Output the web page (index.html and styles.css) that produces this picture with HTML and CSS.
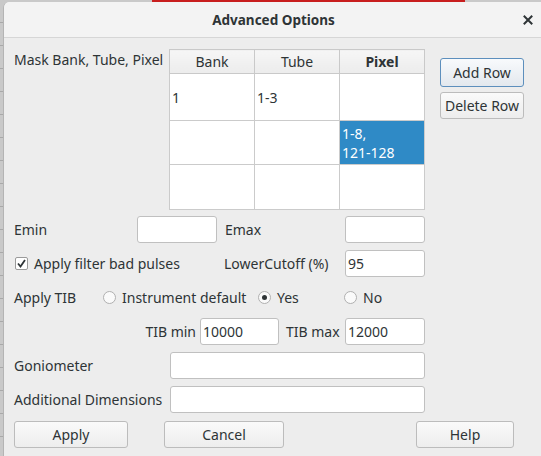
FILE: index.html
```html
<!DOCTYPE html>
<html>
<head>
<meta charset="utf-8">
<link rel="stylesheet" href="styles.css">
</head>
<body>
<div class="window">
  <div class="titlebar">
    <span class="title">Advanced Options</span>
    <svg class="close" width="10" height="10" viewBox="0 0 10 10"><path d="M1.5 1.5L8.5 8.5M8.5 1.5L1.5 8.5" stroke="#2e3436" stroke-width="2" stroke-linecap="square"/></svg>
  </div>
  <div class="content">
    <div class="mask-row">
      <div class="mask-label">Mask Bank, Tube, Pixel</div>
      <table class="grid">
        <colgroup><col><col><col></colgroup>
        <thead>
          <tr><th>Bank</th><th>Tube</th><th class="bold">Pixel</th></tr>
        </thead>
        <tbody>
          <tr class="r1"><td>1</td><td>1-3</td><td></td></tr>
          <tr class="r2"><td></td><td></td><td class="sel">1-8,<br>121-128</td></tr>
          <tr class="r3"><td></td><td></td><td></td></tr>
        </tbody>
      </table>
      <div class="side-buttons">
        <button class="btn default">Add Row</button>
        <button class="btn">Delete Row</button>
      </div>
    </div>

    <div class="row">
      <span class="lbl w-emin">Emin</span>
      <input class="field small" type="text">
      <span class="lbl w-emax">Emax</span>
      <input class="field small" type="text">
    </div>

    <div class="row">
      <label class="check w-check"><span class="box"><svg width="11" height="11" viewBox="0 0 11 11"><path d="M2 5.5L4.5 8.5L9 2" fill="none" stroke="#2e3436" stroke-width="1.8"/></svg></span>Apply filter bad pulses</label>
      <span class="lbl w-cut">LowerCutoff (%)</span>
      <input class="field small" type="text" value="95">
    </div>

    <div class="row">
      <span class="lbl w-tib">Apply TIB</span>
      <span class="radio w-r1"><span class="dot"></span>Instrument default</span>
      <span class="radio w-r2"><span class="dot on"></span>Yes</span>
      <span class="radio"><span class="dot"></span>No</span>
    </div>

    <div class="row">
      <span class="lbl w-tibmin">TIB min</span>
      <input class="field tib" type="text" value="10000">
      <span class="lbl w-tibmax">TIB max</span>
      <input class="field small" type="text" value="12000">
    </div>

    <div class="row">
      <span class="lbl w-long">Goniometer</span>
      <input class="field wide" type="text">
    </div>

    <div class="row">
      <span class="lbl w-long">Additional Dimensions</span>
      <input class="field wide" type="text">
    </div>

    <div class="row bottom">
      <button class="btn apply">Apply</button>
      <button class="btn cancel">Cancel</button>
      <button class="btn help">Help</button>
    </div>
  </div>
</div>
</body>
</html>
```

FILE: styles.css
```css
* { box-sizing: border-box; }

html, body {
  margin: 0;
  height: 456px;
  overflow: hidden;
}

body {
  background:
    linear-gradient(#c81e1e, #c81e1e) 152px 0 / 313px 2px no-repeat,
    repeating-linear-gradient(#c9c9c9 0 22px, #a9a9a9 22px 23px);
  font-family: "Noto Sans", "DejaVu Sans", sans-serif;
  font-size: 14px;
  color: #2e3436;
}

.window {
  margin: 2px 0 0 3px;
  width: 540px;
  height: 456px;
  background: #ededed;
  border-radius: 6px 0 0 0;
  border-left: 1px solid #b4b4b4;
  overflow: hidden;
}

.titlebar {
  height: 36px;
  background: #f3f3f3;
  border-bottom: 1px solid #d6d6d6;
  display: flex;
  align-items: center;
  justify-content: center;
  position: relative;
}

.title {
  font-weight: bold;
  font-size: 13.5px;
  color: #2e3436;
}

.close {
  position: absolute;
  right: 10px;
  top: 13px;
}

.content {
  padding: 11px 0 0 10px;
}

.mask-row {
  display: flex;
  align-items: flex-start;
}

.mask-label {
  width: 155px;
  padding-top: 2px;
  line-height: 18px;
  white-space: nowrap;
}

.grid {
  width: 256px;
  border-collapse: collapse;
  table-layout: fixed;
  background: #fff;
  border: 1px solid #c2c2c2;
}

.grid col { width: 85px; }

.grid th {
  height: 24px;
  font-weight: normal;
  background: linear-gradient(#f6f6f6, #ececec);
  border: 1px solid #c9c9c9;
  padding: 0;
  text-align: center;
}

.grid th.bold { font-weight: bold; }

.grid td {
  border: 1px solid #cbcbcb;
  padding: 0 2px;
  vertical-align: middle;
  line-height: 19px;
}

.grid .r1 td { height: 47px; }
.grid .r2 td { height: 44px; }
.grid .r3 td { height: 45px; }

.grid td.sel {
  background: #2f8ac6;
  color: #fff;
}

.side-buttons {
  display: flex;
  flex-direction: column;
  gap: 5px;
  margin: 9px 0 0 15px;
  width: 84px;
}

.btn {
  font-family: inherit;
  font-size: 14px;
  color: #2e3436;
  height: 27px;
  padding: 0;
  background: linear-gradient(#fafafa, #ededed);
  border: 1px solid #bcbcbc;
  border-radius: 3px;
  white-space: nowrap;
}

.btn.default {
  border-color: #5d8fbd;
  background: linear-gradient(#f8fafc, #e3e8ee);
  height: 29px;
}

.row {
  display: flex;
  align-items: center;
  height: 27px;
  margin-top: 7px;
}

.mask-row + .row { margin-top: 6px; }

.lbl { display: inline-block; white-space: nowrap; }
.w-emin { width: 123px; }
.w-emax { width: 128px; padding-left: 8px; }
.w-check { width: 210px; }
.w-cut { width: 121px; }
.w-tib { width: 89px; }
.w-tibmin { width: 186px; text-align: right; padding-right: 4px; }
.w-tibmax { width: 66px; padding-left: 7px; }
.w-long { width: 156px; }

.field {
  height: 27px;
  border: 1px solid #c0c0c0;
  border-radius: 3px;
  background: #fff;
  font-family: inherit;
  font-size: 14px;
  color: #2e3436;
  padding: 0 2px;
  outline: none;
}

.small { width: 80px; }
.tib { width: 79px; }
.wide { width: 255px; }

.check {
  display: flex;
  align-items: center;
  white-space: nowrap;
}

.box {
  width: 13px;
  height: 13px;
  border: 1px solid #9a9a9a;
  border-radius: 2px;
  background: #fff;
  margin: 0 6px 0 1px;
  display: flex;
  align-items: center;
  justify-content: center;
}

.radio {
  display: flex;
  align-items: center;
  white-space: nowrap;
}

.w-r1 { width: 155px; }
.w-r2 { width: 86px; }

.dot {
  width: 13px;
  height: 13px;
  border-radius: 50%;
  border: 1px solid #b0b0b0;
  background: #fafafa;
  margin-right: 6px;
  display: flex;
  align-items: center;
  justify-content: center;
}

.dot.on::after {
  content: "";
  width: 5px;
  height: 5px;
  border-radius: 50%;
  background: #2e3436;
}

.bottom { height: 28px; }
.apply { width: 114px; }
.cancel { width: 120px; margin-left: 36px; }
.help { width: 98px; margin-left: 132px; }
```
